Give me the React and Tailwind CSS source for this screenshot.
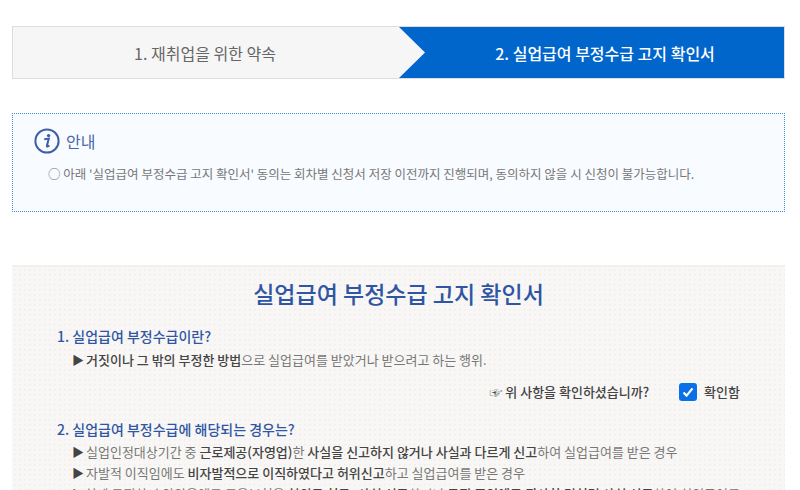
const font = { fontFamily: '"Noto Sans CJK KR", "Noto Sans", sans-serif' };

function B({ children }) {
  return <b className="font-medium text-[#444]">{children}</b>;
}

function Row({ children }) {
  return (
    <li className="flex items-center text-[13px] leading-[21px] text-[#777] whitespace-nowrap">
      <span className="w-[14px] text-[#444] text-[12px]">▶</span>
      <span>{children}</span>
    </li>
  );
}

export default function App() {
  return (
    <div className="h-[490px] w-[800px] overflow-hidden bg-white px-3 pt-[26px] pr-[15px]" style={font}>
      <div className="relative flex h-[53px] w-[773px]">
        <div className="flex w-[387px] items-center justify-center border border-[#dddddd] bg-[#f6f6f6] pr-[1px] text-[16px] text-[#666]">
          1. 재취업을 위한 약속
        </div>
        <div className="flex flex-1 items-center justify-center border border-[#dddddd] border-l-0 bg-[#0066cc] pl-[27px] text-[16px] font-medium text-white">
          2. 실업급여 부정수급 고지 확인서
        </div>
        <div className="absolute left-[386px] top-0 h-[53px] w-[27px]">
          <svg viewBox="0 0 27 53" width="27" height="53">
            <path d="M0 0 L27 26.5 L0 53 Z" fill="#f6f6f6" />
          </svg>
        </div>
      </div>

      <div className="mt-[34px] h-[99px] w-[773px] border border-dotted border-[#3f8fdc] bg-[#f8fbff] pl-[21px] pt-[14px]">
        <div className="flex items-center gap-[6px]">
          <svg width="26" height="26" viewBox="0 0 26 26">
            <circle cx="13" cy="13" r="11.6" fill="none" stroke="#3d5fa8" strokeWidth="2" />
            <circle cx="14.6" cy="7.6" r="1.7" fill="#3d5fa8" />
            <path d="M10.2 11.2 L14.8 10.6 L12.9 17.8 Q12.7 18.8 13.6 18.5 L15.4 17.5" fill="none" stroke="#3d5fa8" strokeWidth="2" />
          </svg>
          <span className="text-[16px] leading-[26px] text-[#4a68a8]">안내</span>
        </div>
        <p className="mt-[10px] pl-[14px] text-[12.5px] leading-[20px] whitespace-nowrap text-[#777]">
          ○ 아래 '실업급여 부정수급 고지 확인서' 동의는 회차별 신청서 저장 이전까지 진행되며, 동의하지 않을 시 신청이 불가능합니다.
        </p>
      </div>

      <div className="mt-[53px] w-[773px] border-t-2 border-[#f1f0ee] bg-[#f8f7f5] bg-[radial-gradient(#f1efec_1px,transparent_1px)] bg-[length:5px_5px] px-[45px] pt-[8px]">
        <h1 className="text-center text-[23px] font-medium leading-[36px] text-[#2f55a4]">실업급여 부정수급 고지 확인서</h1>

        <h2 className="mt-[14px] text-[14px] font-medium leading-[22px] text-[#2f55a4]">1. 실업급여 부정수급이란?</h2>
        <ul className="mt-[2px] pl-[15px]">
          <Row>
            <B>거짓이나 그 밖의 부정한 방법</B>으로 실업급여를 받았거나 받으려고 하는 행위.
          </Row>
        </ul>
        <div className="mt-[10px] flex h-[24px] items-center justify-end pr-0 text-[13px] text-[#444]">
          <span className="font-medium">☞ 위 사항을 확인하셨습니까?</span>
          <span className="ml-[30px] flex h-[18px] w-[18px] items-center justify-center rounded-[3px] bg-[#0b6fe8]">
            <svg width="14" height="14" viewBox="0 0 14 14">
              <path d="M2.5 7.5 L5.6 10.6 L11.5 3.4" fill="none" stroke="white" strokeWidth="2.2" />
            </svg>
          </span>
          <span className="ml-[7px] font-medium">확인함</span>
        </div>

        <h2 className="mt-[14px] text-[14px] font-medium leading-[22px] text-[#2f55a4]">2. 실업급여 부정수급에 해당되는 경우는?</h2>
        <ul className="mt-[1px] pl-[15px]">
          <Row>
            실업인정대상기간 중 <B>근로제공(자영업)</B>한 <B>사실을 신고하지 않거나 사실과 다르게 신고</B>하여 실업급여를 받은 경우
          </Row>
          <Row>
            자발적 이직임에도 <B>비자발적으로 이직하였다고 허위신고</B>하고 실업급여를 받은 경우
          </Row>
          <Row>
            실제 구직하지 않았음에도 고용보험을 <B>허위로 청구·사실 신고</B>하거나 <B>구직 중임에도 퇴사한 것처럼 사실 신고</B>하여 실업급여를
          </Row>
        </ul>
      </div>
    </div>
  );
}
